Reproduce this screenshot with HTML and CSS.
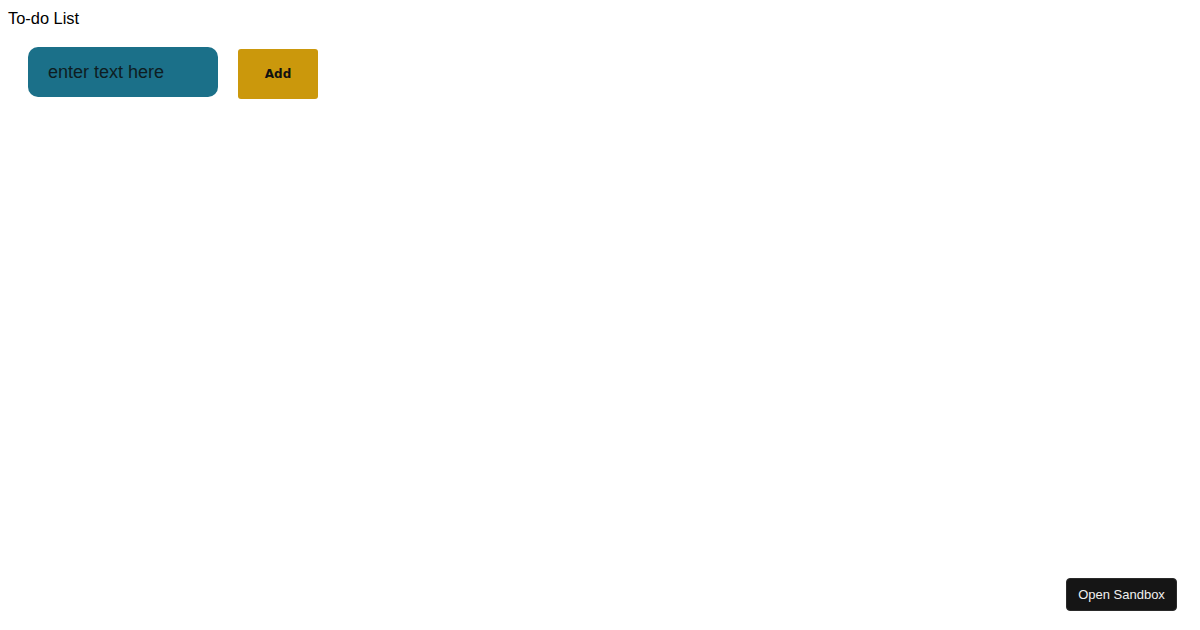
FILE: index.html
```html
<!DOCTYPE html>
<html>
<head>
<meta charset="utf-8">
<link rel="stylesheet" href="styles.css">
</head>
<body>
<div class="title">To-do List</div>
<div class="form">
  <div class="input"><span class="placeholder">enter text here</span></div>
  <button class="add">Add</button>
</div>
<a class="sandbox">Open Sandbox</a>
</body>
</html>
```
FILE: styles.css
```css
html, body {
  margin: 0;
  padding: 0;
  background: #fff;
}
body {
  padding: 8px;
  font-family: "Liberation Sans", Arial, sans-serif;
  color: #000;
}
.title {
  font-size: 16.4px;
  line-height: 18px;
  margin-top: 1px;
}
.form {
  display: flex;
  align-items: flex-start;
  gap: 20px;
  margin: 20px 20px 0;
}
.input {
  width: 190px;
  height: 50px;
  box-sizing: border-box;
  background: #1b7089;
  border-radius: 10px;
  padding: 0 20px;
  display: flex;
  align-items: center;
}
.placeholder {
  font-size: 18px;
  color: #0e1d22;
}
.add {
  margin-top: 2px;
  width: 80px;
  height: 50px;
  border: none;
  border-radius: 3px;
  background: #cb980c;
  font-family: "DejaVu Sans", sans-serif;
  font-weight: bold;
  font-size: 12px;
  color: #111;
  padding: 0;
}
.sandbox {
  position: fixed;
  right: 23px;
  bottom: 19px;
  width: 111px;
  height: 33px;
  box-sizing: border-box;
  background: #151515;
  border-radius: 4px;
  color: #f0f0f0;
  font-size: 13px;
  display: flex;
  align-items: center;
  justify-content: center;
  border: 1px solid #2a2a2a;
}
```
